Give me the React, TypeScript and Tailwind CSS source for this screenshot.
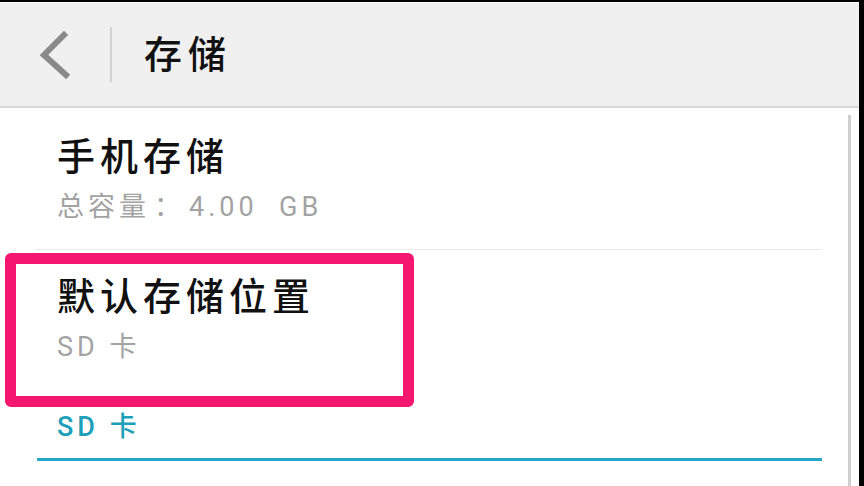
const FONT = 'font-["Roboto","Noto_Sans_CJK_SC",sans-serif]'

function BackChevron() {
  return (
    <svg width="40" height="50" viewBox="0 0 40 50" className="shrink-0">
      <polyline
        points="24,5 4,25 26,45"
        fill="none"
        stroke="#8a8a8a"
        strokeWidth="6"
        strokeLinecap="square"
      />
    </svg>
  )
}

function Header() {
  return (
    <div className="flex h-[105px] items-center border-b-2 border-[#d9d9d9] bg-[#f0f0f0]">
      <div className="ml-[40px]">
        <BackChevron />
      </div>
      <div className="ml-[30px] h-[55px] w-[2px] bg-[#d2d2d2]" />
      <h1 className="ml-[32px] text-[38px] leading-[44px] font-medium tracking-[6px] text-[#111]">
        存储
      </h1>
    </div>
  )
}

export default function App() {
  return (
    <div
      className={`relative h-[486px] w-[864px] overflow-hidden border-r-[5px] border-t-2 border-black bg-white ${FONT}`}
    >
      <div className="border-t border-white">
        <Header />

        <div className="px-[57px] pt-[27px] pb-[27px]">
          <p className="text-[38px] leading-[44px] font-medium tracking-[5px] text-[#111]">
            手机存储
          </p>
          <p className="mt-[13px] text-[27px] leading-[30px] tracking-[4px] whitespace-pre text-[#a3a3a3]">
            总容量<span className="ml-[4px] mr-[4px]">：</span>4.00  GB
          </p>
        </div>
        <div className="ml-[37px] h-px w-[785px] bg-[#e9e9e9]" />

        <div className="px-[57px] pt-[25px]">
          <p className="text-[38px] leading-[44px] font-medium tracking-[5px] text-[#111]">
            默认存储位置
          </p>
          <p className="mt-[13px] text-[27px] leading-[30px] tracking-[4px] text-[#a3a3a3]">
            SD 卡
          </p>
          <p className="mt-[50px] text-[27px] leading-[30px] font-medium tracking-[4px] text-[#1d9fba]">
            SD 卡
          </p>
        </div>
        <div className="mt-[16px] ml-[37px] h-[3px] w-[785px] bg-[#24a7c8]" />
      </div>

      {/* scrollbar */}
      <div className="absolute top-[113px] right-[8px] bottom-0 w-[3px] bg-[#cfcfcf]" />

      {/* annotation box */}
      <div className="absolute top-[251px] left-[5px] h-[154px] w-[409px] rounded-md border-[11px] border-[#f5176f]" />
    </div>
  )
}
